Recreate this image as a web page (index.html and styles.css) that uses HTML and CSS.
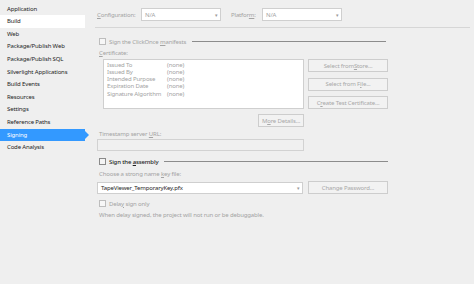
FILE: index.html
```html
<!DOCTYPE html>
<html>
<head>
<meta charset="utf-8">
<link rel="stylesheet" href="styles.css">
</head>
<body>
<div class="frame">
  <nav class="nav">
    <div class="nav-item">Application</div>
    <div class="nav-item selected-white">Build</div>
    <div class="nav-item">Web</div>
    <div class="nav-item">Package/Publish Web</div>
    <div class="nav-item">Package/Publish SQL</div>
    <div class="nav-item">Silverlight Applications</div>
    <div class="nav-item">Build Events</div>
    <div class="nav-item">Resources</div>
    <div class="nav-item">Settings</div>
    <div class="nav-item">Reference Paths</div>
    <div class="nav-item active">Signing</div>
    <div class="nav-item">Code Analysis</div>
  </nav>
  <main class="main">
    <div class="config-row">
      <span class="label"><u>C</u>onfiguration:</span>
      <div class="select config-select"><span>N/A</span><span class="arrow">▾</span></div>
      <span class="label platform-label">Platfor<u>m</u>:</span>
      <div class="select config-select"><span>N/A</span><span class="arrow">▾</span></div>
    </div>
    <div class="top-rule"></div>

    <div class="check-row clickonce">
      <span class="checkbox"></span>
      <span class="label">Sign the ClickOnce <u>m</u>anifests</span>
      <span class="group-rule"></span>
    </div>

    <div class="label small-label"><u>C</u>ertificate:</div>
    <div class="cert-row">
      <div class="cert-box">
        <div class="cert-line"><span class="k">Issued To</span><span>(none)</span></div>
        <div class="cert-line"><span class="k">Issued By</span><span>(none)</span></div>
        <div class="cert-line"><span class="k">Intended Purpose</span><span>(none)</span></div>
        <div class="cert-line"><span class="k">Expiration Date</span><span>(none)</span></div>
        <div class="cert-line"><span class="k">Signature Algorithm</span><span>(none)</span></div>
      </div>
      <div class="cert-buttons">
        <div class="btn wide">Select from <u>S</u>tore...</div>
        <div class="btn wide">Select from F<u>i</u>le...</div>
        <div class="btn wide">C<u>r</u>eate Test Certificate...</div>
      </div>
    </div>
    <div class="more-row">
      <div class="btn more">M<u>o</u>re Details...</div>
    </div>

    <div class="label small-label ts-label">Timestamp server <u>U</u>RL:</div>
    <div class="textbox"></div>

    <div class="check-row assembly">
      <span class="checkbox dark"></span>
      <span class="strong">Sign the <u>a</u>ssembly</span>
      <span class="group-rule"></span>
    </div>

    <div class="label small-label choose-label">Choose a strong name <u>k</u>ey file:</div>
    <div class="key-row">
      <div class="select key-select"><span class="dark-text">TapeViewer_TemporaryKey.pfx</span><span class="arrow">▾</span></div>
      <div class="btn wide">Change Password...</div>
    </div>

    <div class="check-row delay">
      <span class="checkbox"></span>
      <span class="label">Dela<u>y</u> sign only</span>
    </div>
    <div class="label small-label note">When delay signed, the project will not run or be debuggable.</div>
  </main>
</div>
</body>
</html>
```
FILE: styles.css
```css
html, body {
  margin: 0;
  padding: 0;
}
body {
  width: 474px;
  height: 284px;
  background: #efefef;
  font-family: "Noto Sans", "Open Sans", sans-serif;
  font-size: 6px;
  letter-spacing: -0.15px;
  color: #1e1e1e;
  overflow: hidden;
}
u { text-decoration: underline; text-underline-offset: 1px; }

.frame {
  display: flex;
  height: 284px;
}

.nav {
  width: 85px;
  flex: none;
  padding-top: 2.7px;
}
.nav-item {
  height: 12.6px;
  line-height: 12.6px;
  padding-left: 7px;
  color: #1e1e1e;
  white-space: nowrap;
  position: relative;
}
.nav-item.selected-white {
  background: #ffffff;
}
.nav-item.active {
  background: #3399ff;
  color: #ffffff;
}
.nav-item.active::after {
  content: "";
  position: absolute;
  right: -4px;
  top: 2.3px;
  border-left: 4px solid #3399ff;
  border-top: 4px solid transparent;
  border-bottom: 4px solid transparent;
}

.main {
  flex: 1;
  padding-left: 12px;
}

.label { color: #a3a3a3; white-space: nowrap; }
.strong { color: #1e1e1e; white-space: nowrap; font-weight: 500; }
.dark-text { color: #1e1e1e; }

.config-row {
  margin-top: 8px;
  height: 13px;
  display: flex;
  align-items: center;
}
.config-row > .label:first-child { width: 44px; }
.platform-label { margin-left: 10px; width: 31px; }

.select {
  box-sizing: border-box;
  background: #ffffff;
  border: 1px solid #cfcfcf;
  display: flex;
  align-items: center;
  justify-content: space-between;
  padding: 0 2px 0 3px;
  color: #a3a3a3;
}
.config-select {
  width: 80px;
  height: 13px;
}
.arrow {
  font-size: 5px;
  color: #9a9a9a;
}

.top-rule {
  margin-top: 6px;
  margin-left: -2px;
  width: 375px;
  height: 1px;
  background: #d6d6d6;
}

.check-row {
  display: flex;
  align-items: center;
  height: 9px;
  margin-left: 2px;
}
.checkbox {
  box-sizing: border-box;
  width: 7px;
  height: 7px;
  border: 1px solid #bdbdbd;
  background: #f7f7f7;
  margin-right: 3px;
  flex: none;
}
.checkbox.dark { border-color: #8a8a8a; background: #f4f4f4; }
.group-rule {
  height: 1px;
  background: #8c8c8c;
  margin-left: 6px;
}
.clickonce { margin-top: 9px; }
.clickonce .group-rule { width: 194px; }
.assembly .group-rule { width: 224px; }

.small-label {
  height: 8px;
  line-height: 8px;
  margin-left: 2px;
}
.clickonce + .small-label { margin-top: 3px; }

.cert-row {
  margin-top: 2px;
  margin-left: 6px;
  display: flex;
  gap: 4px;
  height: 50px;
}
.cert-box {
  box-sizing: border-box;
  width: 201px;
  height: 50px;
  background: #ffffff;
  border: 1px solid #cfcfcf;
  padding: 1.5px 0 0 3px;
  color: #a3a3a3;
}
.cert-line {
  height: 7.3px;
  line-height: 7.3px;
  display: flex;
  white-space: nowrap;
}
.cert-line .k { width: 60px; }

.cert-buttons {
  display: flex;
  flex-direction: column;
  justify-content: space-between;
}
.btn {
  box-sizing: border-box;
  height: 13px;
  border: 1px solid #cdcdcd;
  background: #f2f2f2;
  color: #a8a8a8;
  display: flex;
  align-items: center;
  justify-content: center;
  white-space: nowrap;
}
.btn.wide { width: 80px; }

.more-row {
  margin-top: 5px;
  width: 207px;
  display: flex;
  justify-content: flex-end;
}
.btn.more { width: 46px; }

.ts-label { margin-top: 3px; }
.textbox {
  margin-top: 1px;
  box-sizing: border-box;
  width: 207px;
  height: 12px;
  border: 1px solid #d2d2d2;
  background: #f0f0f0;
}

.assembly { margin-top: 6px; }
.choose-label { margin-top: 4px; }

.key-row {
  margin-top: 3px;
  display: flex;
  gap: 5px;
  align-items: center;
}
.key-select {
  width: 206px;
  height: 12px;
}

.delay { margin-top: 5px; }
.note { margin-top: 3px; }
```
